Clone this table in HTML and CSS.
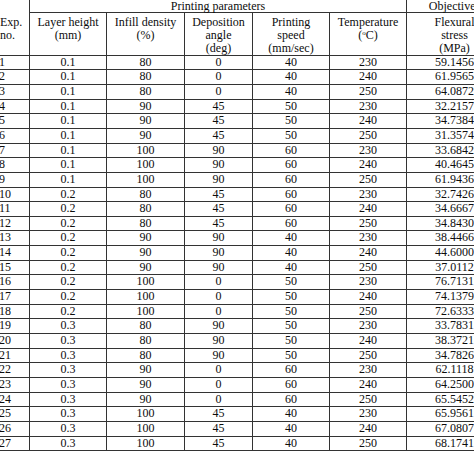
FILE: index.html
```html
<!DOCTYPE html>
<html lang="en">
<head>
<meta charset="utf-8">
<title>Printing parameters</title>
<link rel="stylesheet" href="styles.css">
</head>
<body>
<div class="sheet">
  <div class="c h-exp">Exp.<br>no.</div>
  <div class="c h-group">Printing parameters</div>
  <div class="c h-obj last">Objectives</div>
  <div class="c h">Layer height<br>(mm)</div>
  <div class="c h">Infill density<br>(%)</div>
  <div class="c h">Deposition<br>angle<br>(deg)</div>
  <div class="c h">Printing<br>speed<br>(mm/sec)</div>
  <div class="c h">Temperature<br>(<span class="deg">o</span>C)</div>
  <div class="c h last">Flexural<br>stress<br>(MPa)</div>

  <div class="c no">1</div><div class="c">0.1</div><div class="c">80</div><div class="c">0</div><div class="c">40</div><div class="c">230</div><div class="c last">59.1456</div>
  <div class="c no">2</div><div class="c">0.1</div><div class="c">80</div><div class="c">0</div><div class="c">40</div><div class="c">240</div><div class="c last">61.9565</div>
  <div class="c no">3</div><div class="c">0.1</div><div class="c">80</div><div class="c">0</div><div class="c">40</div><div class="c">250</div><div class="c last">64.0872</div>
  <div class="c no">4</div><div class="c">0.1</div><div class="c">90</div><div class="c">45</div><div class="c">50</div><div class="c">230</div><div class="c last">32.2157</div>
  <div class="c no">5</div><div class="c">0.1</div><div class="c">90</div><div class="c">45</div><div class="c">50</div><div class="c">240</div><div class="c last">34.7384</div>
  <div class="c no">6</div><div class="c">0.1</div><div class="c">90</div><div class="c">45</div><div class="c">50</div><div class="c">250</div><div class="c last">31.3574</div>
  <div class="c no">7</div><div class="c">0.1</div><div class="c">100</div><div class="c">90</div><div class="c">60</div><div class="c">230</div><div class="c last">33.6842</div>
  <div class="c no">8</div><div class="c">0.1</div><div class="c">100</div><div class="c">90</div><div class="c">60</div><div class="c">240</div><div class="c last">40.4645</div>
  <div class="c no">9</div><div class="c">0.1</div><div class="c">100</div><div class="c">90</div><div class="c">60</div><div class="c">250</div><div class="c last">61.9436</div>
  <div class="c no">10</div><div class="c">0.2</div><div class="c">80</div><div class="c">45</div><div class="c">60</div><div class="c">230</div><div class="c last">32.7426</div>
  <div class="c no">11</div><div class="c">0.2</div><div class="c">80</div><div class="c">45</div><div class="c">60</div><div class="c">240</div><div class="c last">34.6667</div>
  <div class="c no">12</div><div class="c">0.2</div><div class="c">80</div><div class="c">45</div><div class="c">60</div><div class="c">250</div><div class="c last">34.8430</div>
  <div class="c no">13</div><div class="c">0.2</div><div class="c">90</div><div class="c">90</div><div class="c">40</div><div class="c">230</div><div class="c last">38.4466</div>
  <div class="c no">14</div><div class="c">0.2</div><div class="c">90</div><div class="c">90</div><div class="c">40</div><div class="c">240</div><div class="c last">44.6000</div>
  <div class="c no">15</div><div class="c">0.2</div><div class="c">90</div><div class="c">90</div><div class="c">40</div><div class="c">250</div><div class="c last">37.0112</div>
  <div class="c no">16</div><div class="c">0.2</div><div class="c">100</div><div class="c">0</div><div class="c">50</div><div class="c">230</div><div class="c last">76.7131</div>
  <div class="c no">17</div><div class="c">0.2</div><div class="c">100</div><div class="c">0</div><div class="c">50</div><div class="c">240</div><div class="c last">74.1379</div>
  <div class="c no">18</div><div class="c">0.2</div><div class="c">100</div><div class="c">0</div><div class="c">50</div><div class="c">250</div><div class="c last">72.6333</div>
  <div class="c no">19</div><div class="c">0.3</div><div class="c">80</div><div class="c">90</div><div class="c">50</div><div class="c">230</div><div class="c last">33.7831</div>
  <div class="c no">20</div><div class="c">0.3</div><div class="c">80</div><div class="c">90</div><div class="c">50</div><div class="c">240</div><div class="c last">38.3721</div>
  <div class="c no">21</div><div class="c">0.3</div><div class="c">80</div><div class="c">90</div><div class="c">50</div><div class="c">250</div><div class="c last">34.7826</div>
  <div class="c no">22</div><div class="c">0.3</div><div class="c">90</div><div class="c">0</div><div class="c">60</div><div class="c">230</div><div class="c last">62.1118</div>
  <div class="c no">23</div><div class="c">0.3</div><div class="c">90</div><div class="c">0</div><div class="c">60</div><div class="c">240</div><div class="c last">64.2500</div>
  <div class="c no">24</div><div class="c">0.3</div><div class="c">90</div><div class="c">0</div><div class="c">60</div><div class="c">250</div><div class="c last">65.5452</div>
  <div class="c no">25</div><div class="c">0.3</div><div class="c">100</div><div class="c">45</div><div class="c">40</div><div class="c">230</div><div class="c last">65.9561</div>
  <div class="c no">26</div><div class="c">0.3</div><div class="c">100</div><div class="c">45</div><div class="c">40</div><div class="c">240</div><div class="c last">67.0807</div>
  <div class="c no">27</div><div class="c">0.3</div><div class="c">100</div><div class="c">45</div><div class="c">40</div><div class="c">250</div><div class="c last">68.1741</div>
</div>
</body>
</html>
```

FILE: styles.css
```css
html, body {
  margin: 0;
  padding: 0;
  background: #ffffff;
  overflow: hidden;
}

.sheet {
  display: grid;
  grid-template-columns: 30px 77px 78px 68px 77px 77px 95px;
  grid-template-rows: 13.3px 42.3px repeat(27, 14.67px);
  width: 502px;
  font-family: "Liberation Serif", "Times New Roman", serif;
  font-size: 12px;
  color: #0d0d0d;
}

.c {
  box-sizing: border-box;
  border-right: 1px solid #333333;
  border-bottom: 1px solid #333333;
  text-align: center;
  line-height: 13.67px;
  white-space: nowrap;
}

.c.last {
  border-right: none;
}

.c.no {
  text-align: left;
  text-indent: -1px;
}

.h-exp {
  grid-row: 1 / span 2;
  text-align: left;
  padding-top: 16px;
  line-height: 13.25px;
}

.h-group {
  grid-column: 2 / span 5;
  line-height: 12.3px;
}

.h-obj {
  line-height: 12.3px;
}

.h {
  padding-top: 2.5px;
  line-height: 13.25px;
}

.deg {
  font-size: 7px;
  position: relative;
  top: -4px;
  line-height: 0;
}
```
